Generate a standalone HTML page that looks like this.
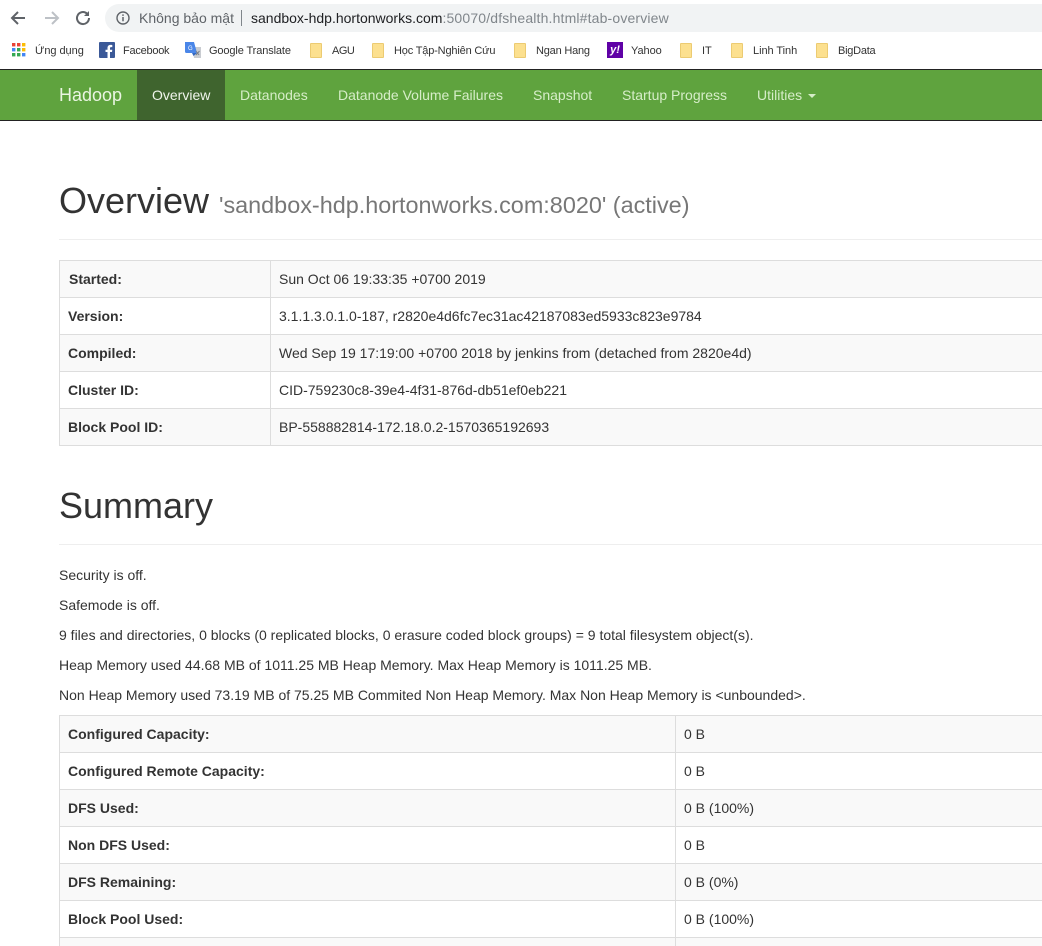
<!DOCTYPE html>
<html><head><meta charset="utf-8"><style>
html,body{margin:0;padding:0;background:#fff;width:1042px;height:946px;overflow:hidden}
#p{position:absolute;left:0;top:0;width:1042px;height:946px;overflow:hidden;font-family:"Liberation Sans","Noto Sans CJK SC",sans-serif;color:#333;font-size:14px}
.a{position:absolute;white-space:nowrap}
.bm{position:absolute;top:43px;font-size:11px;letter-spacing:-.05px;color:#333;line-height:14px;white-space:nowrap;margin-top:.5px}
.f{position:absolute;top:43px;width:12px;height:15px;background:#fce08f;border:1px solid #eccb72;border-radius:1px;box-sizing:border-box}
.n{position:absolute;top:70px;height:50px;line-height:50px;color:#d6edc8;font-size:14px;white-space:nowrap}
.hl{position:absolute;left:59px;right:0;height:1px;background:#eee}
.v{position:absolute;width:1px;background:#ddd}
.h{position:absolute;left:59px;right:0;height:1px;background:#ddd}
.s{position:absolute;left:60px;right:0;height:36px;background:#f9f9f9}
.k{position:absolute;font-weight:bold;line-height:20px;white-space:nowrap}
.t{position:absolute;line-height:20px;white-space:nowrap}
</style></head><body><div id="p">
<svg class="a" style="left:9px;top:9px" width="84" height="18" viewBox="0 0 84 18" fill="none">
<path d="M16 9H3M9 3L3 9l6 6" stroke="#5f6368" stroke-width="2"/>
<path d="M36 9h13M43 3l6 6-6 6" stroke="#bdc1c6" stroke-width="2"/>
<path d="M80 9a6 6 0 1 1-2-4.400" stroke="#5f6368" stroke-width="2"/>
<path d="M80 2v5h-5z" fill="#5f6368"/>
</svg>
<div class="a" style="left:105px;top:4px;width:950px;height:28px;border-radius:14px;background:#f1f3f4"></div>
<svg class="a" style="left:116px;top:11px" width="14" height="14" viewBox="0 0 14 14" fill="none"><circle cx="7" cy="7" r="6" stroke="#5f6368" stroke-width="1.400"/><path d="M7 6v4.200M7 3.400v1.500" stroke="#5f6368" stroke-width="1.500"/></svg>
<div class="a" style="left:139px;top:10px;font-size:14px;line-height:16px;color:#5f6368">Không bảo mật</div>
<div class="a" style="left:241px;top:10px;width:1px;height:16px;background:#80868b"></div>
<div class="a" style="left:251px;top:10px;font-size:14px;line-height:16px;color:#80868b"><span style="color:#202124">sandbox-hdp.hortonworks.com</span><span style="letter-spacing:.16px">:50070/dfshealth.html#tab-overview</span></div>

<svg class="a" style="left:12px;top:43px" width="14" height="14" viewBox="0 0 14 14">
<rect x="0" y="0" width="3.400" height="3.400" fill="#ea4335"/><rect x="5" y="0" width="3.400" height="3.400" fill="#ea4335"/><rect x="10" y="0" width="3.400" height="3.400" fill="#fbbc05"/>
<rect x="0" y="5" width="3.400" height="3.400" fill="#4285f4"/><rect x="5" y="5" width="3.400" height="3.400" fill="#34a853"/><rect x="10" y="5" width="3.400" height="3.400" fill="#fbbc05"/>
<rect x="0" y="10" width="3.400" height="3.400" fill="#34a853"/><rect x="5" y="10" width="3.400" height="3.400" fill="#34a853"/><rect x="10" y="10" width="3.400" height="3.400" fill="#4285f4"/></svg>
<div class="bm" style="left:35px">Ứng dụng</div>
<svg class="a" style="left:99px;top:42px" width="16" height="16" viewBox="0 0 16 16"><rect width="16" height="16" rx="1" fill="#3b5998"/><path d="M11 16V10h2l.3-2.300H11V6.200c0-.7.2-1.100 1.100-1.100h1.200V3c-.3 0-1-.1-1.800-.1-1.800 0-3 1.100-3 3.100v1.700H6.500V10h2v6z" fill="#fff"/></svg>
<div class="bm" style="left:123px;letter-spacing:-.25px">Facebook</div>
<svg class="a" style="left:185px;top:42px" width="17" height="17" viewBox="0 0 17 17"><path d="M7 5h9v11H9z" fill="#c9ccd1"/><path d="M0 0h9l3 11H1.500A1.500 1.500 0 0 1 0 9.500z" fill="#4a86e8"/><path d="M7 11h5l-3.500 3z" fill="#3367c0"/><text x="3" y="8" font-size="6" fill="#fff" font-family="Liberation Sans">G</text><path d="M11 9l3 4M14.500 9l-3.500 4" stroke="#7b8088" stroke-width="1"/></svg>
<div class="bm" style="left:209px;letter-spacing:-.12px">Google Translate</div>
<div class="f" style="left:310px"></div><div class="bm" style="left:332px;letter-spacing:-.5px">AGU</div>
<div class="f" style="left:372px"></div><div class="bm" style="left:394px;letter-spacing:-.17px">Học Tập-Nghiên Cứu</div>
<div class="f" style="left:514px"></div><div class="bm" style="left:536px;letter-spacing:-.2px">Ngan Hang</div>
<div class="a" style="left:607px;top:42px;width:16px;height:16px;background:#5f01a6;color:#fff;font:bold 11px/16px 'Liberation Sans',sans-serif;text-align:center;font-style:italic">y!</div>
<div class="bm" style="left:631px">Yahoo</div>
<div class="f" style="left:680px"></div><div class="bm" style="left:702px">IT</div>
<div class="f" style="left:731px"></div><div class="bm" style="left:753px">Linh Tinh</div>
<div class="f" style="left:816px"></div><div class="bm" style="left:838px;letter-spacing:-.25px">BigData</div>

<div class="a" style="left:0;right:0;top:69px;height:52px;box-sizing:border-box;background:#5fa33e;border-top:1px solid #222;border-bottom:1px solid #222"></div>
<div class="a" style="left:137px;top:70px;width:88px;height:50px;background:#3f642e"></div>
<div class="n" style="left:59px;font-size:18px;color:#eaf5e2">Hadoop</div>
<div class="n" style="left:152px;color:#f0f5ec">Overview</div>
<div class="n" style="left:240px">Datanodes</div>
<div class="n" style="left:338px">Datanode Volume Failures</div>
<div class="n" style="left:533px">Snapshot</div>
<div class="n" style="left:622px">Startup Progress</div>
<div class="n" style="left:757px">Utilities</div>
<div class="a" style="left:808px;top:94px;width:0;height:0;border-left:4px solid transparent;border-right:4px solid transparent;border-top:4px solid #d6edc8"></div>

<div class="a" style="left:59px;top:180px;font-size:36px;line-height:42px;color:#333">Overview</div>
<div class="a" style="left:219px;top:191px;font-size:23.4px;line-height:28px;color:#777">'sandbox-hdp.hortonworks.com:8020' (active)</div>
<div class="hl" style="top:239px"></div>

<div class="s" style="top:261px"></div><div class="s" style="top:335px"></div><div class="s" style="top:409px"></div>
<div class="h" style="top:260px"></div><div class="h" style="top:297px"></div><div class="h" style="top:334px"></div><div class="h" style="top:371px"></div><div class="h" style="top:408px"></div><div class="h" style="top:445px"></div>
<div class="v" style="left:59px;top:260px;height:186px"></div><div class="v" style="left:270px;top:260px;height:186px"></div>
<div class="k" style="left:69px;top:269px">Started:</div><div class="t" style="left:279px;top:269px">Sun Oct 06 19:33:35 +0700 2019</div>
<div class="k" style="left:68px;top:306px">Version:</div><div class="t" style="left:279px;top:306px">3.1.1.3.0.1.0-187, r2820e4d6fc7ec31ac42187083ed5933c823e9784</div>
<div class="k" style="left:68px;top:343px">Compiled:</div><div class="t" style="left:279px;top:343px">Wed Sep 19 17:19:00 +0700 2018 by jenkins from (detached from 2820e4d)</div>
<div class="k" style="left:68px;top:380px">Cluster ID:</div><div class="t" style="left:279px;top:380px">CID-759230c8-39e4-4f31-876d-db51ef0eb221</div>
<div class="k" style="left:68px;top:417px">Block Pool ID:</div><div class="t" style="left:279px;top:417px">BP-558882814-172.18.0.2-1570365192693</div>

<div class="a" style="left:59px;top:485px;font-size:36px;line-height:42px">Summary</div>
<div class="hl" style="top:544px"></div>

<div class="t" style="left:59px;top:565px">Security is off.</div>
<div class="t" style="left:59px;top:595px">Safemode is off.</div>
<div class="t" style="left:59px;top:625px">9 files and directories, 0 blocks (0 replicated blocks, 0 erasure coded block groups) = 9 total filesystem object(s).</div>
<div class="t" style="left:59px;top:655px">Heap Memory used 44.68 MB of 1011.25 MB Heap Memory. Max Heap Memory is 1011.25 MB.</div>
<div class="t" style="left:59px;top:685px">Non Heap Memory used 73.19 MB of 75.25 MB Commited Non Heap Memory. Max Non Heap Memory is &lt;unbounded&gt;.</div>

<div class="s" style="top:716px"></div><div class="s" style="top:790px"></div><div class="s" style="top:864px"></div><div class="s" style="top:938px;height:8px"></div>
<div class="h" style="top:715px"></div><div class="h" style="top:752px"></div><div class="h" style="top:789px"></div><div class="h" style="top:826px"></div><div class="h" style="top:863px"></div><div class="h" style="top:900px"></div><div class="h" style="top:937px"></div>
<div class="v" style="left:59px;top:715px;height:231px"></div><div class="v" style="left:675px;top:715px;height:231px"></div>
<div class="k" style="left:68px;top:724px">Configured Capacity:</div><div class="t" style="left:684px;top:724px">0 B</div>
<div class="k" style="left:68px;top:761px">Configured Remote Capacity:</div><div class="t" style="left:684px;top:761px">0 B</div>
<div class="k" style="left:68px;top:798px">DFS Used:</div><div class="t" style="left:684px;top:798px">0 B (100%)</div>
<div class="k" style="left:68px;top:835px">Non DFS Used:</div><div class="t" style="left:684px;top:835px">0 B</div>
<div class="k" style="left:68px;top:872px">DFS Remaining:</div><div class="t" style="left:684px;top:872px">0 B (0%)</div>
<div class="k" style="left:68px;top:909px">Block Pool Used:</div><div class="t" style="left:684px;top:909px">0 B (100%)</div>
</div></body></html>
